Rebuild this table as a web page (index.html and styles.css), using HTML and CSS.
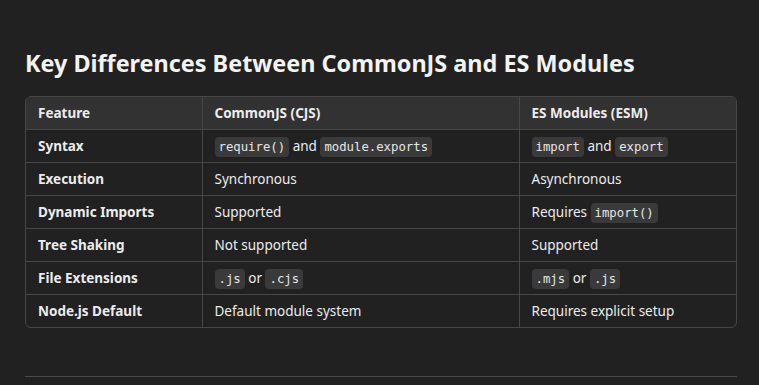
FILE: index.html
```html
<!DOCTYPE html>
<html>
<head>
<meta charset="utf-8">
<link rel="stylesheet" href="styles.css">
</head>
<body>
<main class="page">
  <h2 class="title">Key Differences Between CommonJS and ES Modules</h2>
  <div class="table-wrap">
    <table class="cmp">
      <colgroup>
        <col class="c1"><col class="c2"><col class="c3">
      </colgroup>
      <thead>
        <tr><th>Feature</th><th>CommonJS (CJS)</th><th>ES Modules (ESM)</th></tr>
      </thead>
      <tbody>
        <tr><td class="feat">Syntax</td><td><code>require()</code> and <code>module.exports</code></td><td><code>import</code> and <code>export</code></td></tr>
        <tr><td class="feat">Execution</td><td>Synchronous</td><td>Asynchronous</td></tr>
        <tr><td class="feat">Dynamic Imports</td><td>Supported</td><td>Requires <code>import()</code></td></tr>
        <tr><td class="feat">Tree Shaking</td><td>Not supported</td><td>Supported</td></tr>
        <tr><td class="feat">File Extensions</td><td><code>.js</code> or <code>.cjs</code></td><td><code>.mjs</code> or <code>.js</code></td></tr>
        <tr><td class="feat">Node.js Default</td><td>Default module system</td><td>Requires explicit setup</td></tr>
      </tbody>
    </table>
  </div>
  <hr class="rule">
</main>
</body>
</html>
```
FILE: styles.css
```css
html, body {
  margin: 0;
  background: #212121;
  color: #ececec;
  font-family: "Noto Sans", "Open Sans", sans-serif;
}
.page {
  padding: 0 22px 0 25px;
  width: 712px;
}
.title {
  margin: 0;
  padding-top: 46px;
  font-size: 23.4px;
  line-height: 34px;
  font-weight: 700;
  color: #f3f3f3;
}
.table-wrap {
  margin-top: 16px;
  border: 1px solid #474747;
  border-radius: 6px;
  overflow: hidden;
}
.cmp {
  width: 100%;
  border-collapse: collapse;
  table-layout: fixed;
  font-size: 13.5px;
}
.c1 { width: 176px; }
.c2 { width: 317px; }
.c3 { width: auto; }
.cmp th, .cmp td {
  height: 32px;
  padding: 0 12px;
  text-align: left;
  border-right: 1px solid #474747;
  border-bottom: 1px solid #474747;
  line-height: 20px;
}
.cmp th:last-child, .cmp td:last-child { border-right: none; }
.cmp tbody tr:last-child td { border-bottom: none; }
.cmp th {
  background: #323232;
  font-weight: 700;
}
.cmp td.feat { font-weight: 700; }
code {
  font-family: "DejaVu Sans Mono", monospace;
  font-size: 12.3px;
  background: #3a3a3a;
  border-radius: 4px;
  padding: 3px 4px;
  color: #e6e6e6;
}
.rule {
  margin: 48px 0 0;
  border: none;
  border-top: 1px solid #4a4a4a;
  height: 0;
}
```
